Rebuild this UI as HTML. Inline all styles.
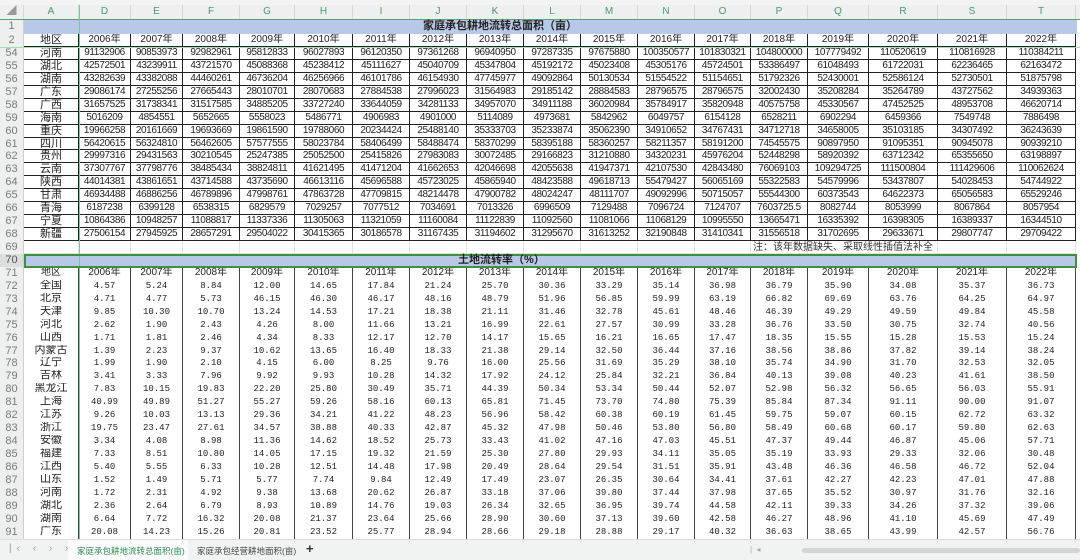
<!DOCTYPE html>
<html><head><meta charset="utf-8"><style>
*{margin:0;padding:0;box-sizing:border-box}
body{width:1080px;height:560px;overflow:hidden;background:#fff;position:relative;font-family:"Liberation Sans","Noto Sans CJK SC",sans-serif;color:#222}
.top{position:absolute;left:0;top:0;width:1080px;height:5px;background:#f3f3f3}
.ch{position:absolute;left:0;top:5px;height:15px;width:1080px;background:#eeefef;border-bottom:1px solid #5aa070;display:flex;font-size:10px;color:#4a9a6a}
.ch span{text-align:center;line-height:14px;border-right:1px solid #d6d6d6}
.r{display:flex;height:12.94px;width:1080px}
.r>*{flex:none;height:100%;text-align:center;font-style:normal;font-weight:normal;font-size:10px;line-height:12.9px;white-space:nowrap;overflow:hidden}
.ch>*:nth-child(1),.r>*:nth-child(1){width:24px}
.ch>*:nth-child(2),.r>*:nth-child(2){width:55px}
.ch>*:nth-child(3),.r>*:nth-child(3){width:52px}
.ch>*:nth-child(4),.r>*:nth-child(4){width:52px}
.ch>*:nth-child(5),.r>*:nth-child(5){width:57px}
.ch>*:nth-child(6),.r>*:nth-child(6){width:55px}
.ch>*:nth-child(7),.r>*:nth-child(7){width:58px}
.ch>*:nth-child(8),.r>*:nth-child(8),.ch>*:nth-child(9),.r>*:nth-child(9),.ch>*:nth-child(10),.r>*:nth-child(10),.ch>*:nth-child(11),.r>*:nth-child(11),.ch>*:nth-child(12),.r>*:nth-child(12),.ch>*:nth-child(13),.r>*:nth-child(13),.ch>*:nth-child(15),.r>*:nth-child(15){width:57px}
.ch>*:nth-child(14),.r>*:nth-child(14){width:56px}
.ch>*:nth-child(16),.r>*:nth-child(16){width:61px}
.ch>*:nth-child(17),.r>*:nth-child(17),.ch>*:nth-child(18),.r>*:nth-child(18),.ch>*:nth-child(19),.r>*:nth-child(19){width:69px}
.r>b{background:#eeefef;color:#7a7a7a;border-right:1px solid #cfcfcf;font-size:11px}
.a>i{border-right:1px solid #222;border-bottom:1px solid #222;letter-spacing:-0.4px}
.a>i:nth-child(2),.h>i:nth-child(2),.c>i:nth-child(2){font-size:11px;letter-spacing:0}
.h>i{border-right:1px solid #222;border-bottom:1px solid #222}
.c>i{border-right:1px solid #444;font-family:"Liberation Mono","Noto Sans CJK SC",monospace;font-size:9px}
.h.c>i{font-family:"Liberation Sans","Noto Sans CJK SC",sans-serif;font-size:10px;border-bottom:none}
.e>i{border-right:1px solid #e2e2e2;border-bottom:1px solid #e2e2e2}
.t{position:relative}
.t>em{position:absolute!important;left:24px;top:0;width:1053px!important;height:100%;background:#b7c9e6}
.t>b{position:relative;z-index:1}
.t>s{position:absolute!important;width:auto!important;overflow:visible!important;top:0;text-decoration:none;font-weight:bold;font-size:11px;line-height:13px;z-index:1;color:#222}
#wrap{position:absolute;left:0;top:34px}
.fz{position:absolute;left:79px;top:5px;width:1px;height:534px;background:#7cc79a}
.fh{position:absolute;left:0;top:47px;width:1080px;height:1px;background:#a8dcbc}
.sel{position:absolute;left:24px;top:253.5px;width:1053px;height:14.5px;border:2px solid #3f8f3f}
.tabs{position:absolute;left:0;top:539px;width:1080px;height:21px;background:#f1f2f2;border-top:1px solid #dcdcdc;font-size:8.5px;font-family:"Liberation Sans","Noto Sans CJK SC",sans-serif}
.tabs span{position:absolute;top:5px;white-space:nowrap}
</style></head><body>
<div class="top"></div>
<div class="ch"><span style="color:#999">◢</span><span>A</span><span>D</span><span>E</span><span>F</span><span>G</span><span>H</span><span>I</span><span>J</span><span>K</span><span>L</span><span>M</span><span>N</span><span>O</span><span>P</span><span>Q</span><span>R</span><span>S</span><span>T</span></div>
<div class="r t" style="position:absolute;top:20px;height:14px"><b>1</b><em></em><s style="left:423px">家庭承包耕地流转总面积（亩）</s></div>
<div id="wrap">
<div class="r h"><b>2</b><i>地区</i><i>2006年</i><i>2007年</i><i>2008年</i><i>2009年</i><i>2010年</i><i>2011年</i><i>2012年</i><i>2013年</i><i>2014年</i><i>2015年</i><i>2016年</i><i>2017年</i><i>2018年</i><i>2019年</i><i>2020年</i><i>2021年</i><i>2022年</i></div>
<div class="r a"><b>54</b><i>河南</i><i>91132906</i><i>90853973</i><i>92982961</i><i>95812833</i><i>96027893</i><i>96120350</i><i>97361268</i><i>96940950</i><i>97287335</i><i>97675880</i><i>100350577</i><i>101830321</i><i>104800000</i><i>107779492</i><i>110520619</i><i>110816928</i><i>110384211</i></div>
<div class="r a"><b>55</b><i>湖北</i><i>42572501</i><i>43239911</i><i>43721570</i><i>45088368</i><i>45238412</i><i>45111627</i><i>45040709</i><i>45347804</i><i>45192172</i><i>45023408</i><i>45305176</i><i>45724501</i><i>53386497</i><i>61048493</i><i>61722031</i><i>62236465</i><i>62163472</i></div>
<div class="r a"><b>56</b><i>湖南</i><i>43282639</i><i>43382088</i><i>44460261</i><i>46736204</i><i>46256966</i><i>46101786</i><i>46154930</i><i>47745977</i><i>49092864</i><i>50130534</i><i>51554522</i><i>51154651</i><i>51792326</i><i>52430001</i><i>52586124</i><i>52730501</i><i>51875798</i></div>
<div class="r a"><b>57</b><i>广东</i><i>29086174</i><i>27255256</i><i>27665443</i><i>28010701</i><i>28070683</i><i>27884538</i><i>27996023</i><i>31564983</i><i>29185142</i><i>28884583</i><i>28796575</i><i>28796575</i><i>32002430</i><i>35208284</i><i>35264789</i><i>43727562</i><i>34939363</i></div>
<div class="r a"><b>58</b><i>广西</i><i>31657525</i><i>31738341</i><i>31517585</i><i>34885205</i><i>33727240</i><i>33644059</i><i>34281133</i><i>34957070</i><i>34911188</i><i>36020984</i><i>35784917</i><i>35820948</i><i>40575758</i><i>45330567</i><i>47452525</i><i>48953708</i><i>46620714</i></div>
<div class="r a"><b>59</b><i>海南</i><i>5016209</i><i>4854551</i><i>5652665</i><i>5558023</i><i>5486771</i><i>4906983</i><i>4901000</i><i>5114089</i><i>4973681</i><i>5842962</i><i>6049757</i><i>6154128</i><i>6528211</i><i>6902294</i><i>6459366</i><i>7549748</i><i>7886498</i></div>
<div class="r a"><b>60</b><i>重庆</i><i>19966258</i><i>20161669</i><i>19693669</i><i>19861590</i><i>19788060</i><i>20234424</i><i>25488140</i><i>35333703</i><i>35233874</i><i>35062390</i><i>34910652</i><i>34767431</i><i>34712718</i><i>34658005</i><i>35103185</i><i>34307492</i><i>36243639</i></div>
<div class="r a"><b>61</b><i>四川</i><i>56420615</i><i>56324810</i><i>56462605</i><i>57577555</i><i>58023784</i><i>58406499</i><i>58488474</i><i>58370299</i><i>58395188</i><i>58360257</i><i>58211357</i><i>58191200</i><i>74545575</i><i>90897950</i><i>91095351</i><i>90945078</i><i>90939210</i></div>
<div class="r a"><b>62</b><i>贵州</i><i>29997316</i><i>29431563</i><i>30210545</i><i>25247385</i><i>25052500</i><i>25415826</i><i>27983083</i><i>30072485</i><i>29166823</i><i>31210880</i><i>34320231</i><i>45976204</i><i>52448298</i><i>58920392</i><i>63712342</i><i>65355650</i><i>63198897</i></div>
<div class="r a"><b>63</b><i>云南</i><i>37307767</i><i>37798776</i><i>38485434</i><i>38824811</i><i>41621495</i><i>41471204</i><i>41662653</i><i>42046698</i><i>42055638</i><i>41947371</i><i>42107530</i><i>42843480</i><i>76069103</i><i>109294725</i><i>111500804</i><i>111429606</i><i>110062624</i></div>
<div class="r a"><b>64</b><i>陕西</i><i>44014381</i><i>43861651</i><i>43714588</i><i>43735690</i><i>46613116</i><i>45696588</i><i>45723025</i><i>45865940</i><i>48423588</i><i>49618713</i><i>55479427</i><i>56065169</i><i>55322583</i><i>54579996</i><i>53437807</i><i>54028453</i><i>54744922</i></div>
<div class="r a"><b>65</b><i>甘肃</i><i>46934488</i><i>46886256</i><i>46789896</i><i>47998761</i><i>47863728</i><i>47709815</i><i>48214478</i><i>47900782</i><i>48024247</i><i>48111707</i><i>49092996</i><i>50715057</i><i>55544300</i><i>60373543</i><i>64622373</i><i>65056583</i><i>65529246</i></div>
<div class="r a"><b>66</b><i>青海</i><i>6187238</i><i>6399128</i><i>6538315</i><i>6829579</i><i>7029257</i><i>7077512</i><i>7034691</i><i>7013326</i><i>6996509</i><i>7129488</i><i>7096724</i><i>7124707</i><i>7603725.5</i><i>8082744</i><i>8053999</i><i>8067864</i><i>8057954</i></div>
<div class="r a"><b>67</b><i>宁夏</i><i>10864386</i><i>10948257</i><i>11088817</i><i>11337336</i><i>11305063</i><i>11321059</i><i>11160084</i><i>11122839</i><i>11092560</i><i>11081066</i><i>11068129</i><i>10995550</i><i>13665471</i><i>16335392</i><i>16398305</i><i>16389337</i><i>16344510</i></div>
<div class="r a"><b>68</b><i>新疆</i><i>27506154</i><i>27945925</i><i>28657291</i><i>29504022</i><i>30415365</i><i>30186578</i><i>31167435</i><i>31194602</i><i>31295670</i><i>31613252</i><i>32190848</i><i>31410341</i><i>31556518</i><i>31702695</i><i>29633671</i><i>29807747</i><i>29709422</i></div>
<div class="r e t"><b>69</b><i></i><i></i><i></i><i></i><i></i><i></i><i></i><i></i><i></i><i></i><i></i><i></i><i></i><i></i><i></i><i></i><i></i><i></i><s style="left:753px;font-weight:normal;font-size:10px;color:#333">注：该年数据缺失、采取线性插值法补全</s></div>
<div class="r t"><b style="background:#dcdddd;color:#555">70</b><em></em><s style="left:458px">土地流转率（%）</s></div>
<div class="r h c"><b>71</b><i>地区</i><i>2006年</i><i>2007年</i><i>2008年</i><i>2009年</i><i>2010年</i><i>2011年</i><i>2012年</i><i>2013年</i><i>2014年</i><i>2015年</i><i>2016年</i><i>2017年</i><i>2018年</i><i>2019年</i><i>2020年</i><i>2021年</i><i>2022年</i></div>
<div class="r c"><b>72</b><i>全国</i><i>4.57</i><i>5.24</i><i>8.84</i><i>12.00</i><i>14.65</i><i>17.84</i><i>21.24</i><i>25.70</i><i>30.36</i><i>33.29</i><i>35.14</i><i>36.98</i><i>36.79</i><i>35.90</i><i>34.08</i><i>35.37</i><i>36.73</i></div>
<div class="r c"><b>73</b><i>北京</i><i>4.71</i><i>4.77</i><i>5.73</i><i>46.15</i><i>46.30</i><i>46.17</i><i>48.16</i><i>48.79</i><i>51.96</i><i>56.85</i><i>59.99</i><i>63.19</i><i>66.82</i><i>69.69</i><i>63.76</i><i>64.25</i><i>64.97</i></div>
<div class="r c"><b>74</b><i>天津</i><i>9.85</i><i>10.30</i><i>10.70</i><i>13.24</i><i>14.53</i><i>17.21</i><i>18.38</i><i>21.11</i><i>31.46</i><i>32.78</i><i>45.61</i><i>48.46</i><i>46.39</i><i>49.29</i><i>49.59</i><i>49.84</i><i>45.58</i></div>
<div class="r c"><b>75</b><i>河北</i><i>2.62</i><i>1.90</i><i>2.43</i><i>4.26</i><i>8.00</i><i>11.66</i><i>13.21</i><i>16.99</i><i>22.61</i><i>27.57</i><i>30.99</i><i>33.28</i><i>36.76</i><i>33.50</i><i>30.75</i><i>32.74</i><i>40.56</i></div>
<div class="r c"><b>76</b><i>山西</i><i>1.71</i><i>1.81</i><i>2.46</i><i>4.34</i><i>8.33</i><i>12.17</i><i>12.70</i><i>14.17</i><i>15.65</i><i>16.21</i><i>16.65</i><i>17.47</i><i>18.35</i><i>15.55</i><i>15.28</i><i>15.53</i><i>15.24</i></div>
<div class="r c"><b>77</b><i>内蒙古</i><i>1.39</i><i>2.23</i><i>9.37</i><i>10.62</i><i>13.65</i><i>16.40</i><i>18.33</i><i>21.38</i><i>29.14</i><i>32.50</i><i>36.44</i><i>37.16</i><i>38.56</i><i>38.86</i><i>37.82</i><i>39.14</i><i>38.24</i></div>
<div class="r c"><b>78</b><i>辽宁</i><i>1.99</i><i>1.90</i><i>2.10</i><i>4.15</i><i>6.00</i><i>8.25</i><i>9.76</i><i>16.00</i><i>25.56</i><i>31.69</i><i>35.29</i><i>38.10</i><i>35.74</i><i>34.90</i><i>31.70</i><i>32.53</i><i>32.05</i></div>
<div class="r c"><b>79</b><i>吉林</i><i>3.41</i><i>3.33</i><i>7.96</i><i>9.92</i><i>9.93</i><i>10.28</i><i>14.32</i><i>17.92</i><i>24.12</i><i>25.84</i><i>32.21</i><i>36.84</i><i>40.13</i><i>39.08</i><i>40.23</i><i>41.61</i><i>38.50</i></div>
<div class="r c"><b>80</b><i>黑龙江</i><i>7.83</i><i>10.15</i><i>19.83</i><i>22.20</i><i>25.80</i><i>30.49</i><i>35.71</i><i>44.39</i><i>50.34</i><i>53.34</i><i>50.44</i><i>52.07</i><i>52.98</i><i>56.32</i><i>56.65</i><i>56.03</i><i>55.91</i></div>
<div class="r c"><b>81</b><i>上海</i><i>40.99</i><i>49.89</i><i>51.27</i><i>55.27</i><i>59.26</i><i>58.16</i><i>60.13</i><i>65.81</i><i>71.45</i><i>73.70</i><i>74.80</i><i>75.39</i><i>85.84</i><i>87.34</i><i>91.11</i><i>90.00</i><i>91.07</i></div>
<div class="r c"><b>82</b><i>江苏</i><i>9.26</i><i>10.03</i><i>13.13</i><i>29.36</i><i>34.21</i><i>41.22</i><i>48.23</i><i>56.96</i><i>58.42</i><i>60.38</i><i>60.19</i><i>61.45</i><i>59.75</i><i>59.07</i><i>60.15</i><i>62.72</i><i>63.32</i></div>
<div class="r c"><b>83</b><i>浙江</i><i>19.75</i><i>23.47</i><i>27.61</i><i>34.57</i><i>38.88</i><i>40.33</i><i>42.87</i><i>45.32</i><i>47.98</i><i>50.46</i><i>53.80</i><i>56.80</i><i>58.49</i><i>60.68</i><i>60.17</i><i>59.80</i><i>62.63</i></div>
<div class="r c"><b>84</b><i>安徽</i><i>3.34</i><i>4.08</i><i>8.98</i><i>11.36</i><i>14.62</i><i>18.52</i><i>25.73</i><i>33.43</i><i>41.02</i><i>47.16</i><i>47.03</i><i>45.51</i><i>47.37</i><i>49.44</i><i>46.87</i><i>45.06</i><i>57.71</i></div>
<div class="r c"><b>85</b><i>福建</i><i>7.33</i><i>8.51</i><i>10.80</i><i>14.05</i><i>17.15</i><i>19.32</i><i>21.59</i><i>25.30</i><i>27.80</i><i>29.93</i><i>34.11</i><i>35.05</i><i>35.19</i><i>33.93</i><i>29.33</i><i>32.06</i><i>30.48</i></div>
<div class="r c"><b>86</b><i>江西</i><i>5.40</i><i>5.55</i><i>6.33</i><i>10.28</i><i>12.51</i><i>14.48</i><i>17.98</i><i>20.49</i><i>28.64</i><i>29.54</i><i>31.51</i><i>35.91</i><i>43.48</i><i>46.36</i><i>46.58</i><i>46.72</i><i>52.04</i></div>
<div class="r c"><b>87</b><i>山东</i><i>1.52</i><i>1.49</i><i>5.71</i><i>5.77</i><i>7.74</i><i>9.84</i><i>12.49</i><i>17.49</i><i>23.07</i><i>26.35</i><i>30.64</i><i>34.41</i><i>37.61</i><i>42.27</i><i>42.23</i><i>47.01</i><i>47.88</i></div>
<div class="r c"><b>88</b><i>河南</i><i>1.72</i><i>2.31</i><i>4.92</i><i>9.38</i><i>13.68</i><i>20.62</i><i>26.87</i><i>33.18</i><i>37.06</i><i>39.80</i><i>37.44</i><i>37.98</i><i>37.65</i><i>35.52</i><i>30.97</i><i>31.76</i><i>32.16</i></div>
<div class="r c"><b>89</b><i>湖北</i><i>2.36</i><i>2.64</i><i>6.79</i><i>8.93</i><i>10.89</i><i>14.76</i><i>19.03</i><i>26.34</i><i>32.65</i><i>36.95</i><i>39.74</i><i>44.58</i><i>42.11</i><i>39.33</i><i>34.26</i><i>37.32</i><i>39.06</i></div>
<div class="r c"><b>90</b><i>湖南</i><i>6.64</i><i>7.72</i><i>16.32</i><i>20.08</i><i>21.37</i><i>23.64</i><i>25.66</i><i>28.90</i><i>30.60</i><i>37.13</i><i>39.60</i><i>42.58</i><i>46.27</i><i>48.96</i><i>41.10</i><i>45.69</i><i>47.49</i></div>
<div class="r c"><b>91</b><i>广东</i><i>20.08</i><i>14.23</i><i>15.26</i><i>20.81</i><i>23.52</i><i>25.77</i><i>28.94</i><i>28.66</i><i>29.18</i><i>28.88</i><i>29.17</i><i>40.32</i><i>36.63</i><i>38.65</i><i>43.99</i><i>42.57</i><i>56.76</i></div>
<div class="r c"><b>92</b><i>广西</i><i></i><i></i><i></i><i></i><i></i><i></i><i></i><i></i><i></i><i></i><i></i><i></i><i></i><i></i><i></i><i></i><i></i></div>
</div>
<div class="fz"></div>
<div class="fh"></div>
<div class="sel"></div>
<div class="tabs">
<span style="left:9px;color:#999;letter-spacing:5px;font-size:10px;top:3px">|‹ ‹ › ›|</span>
<div style="position:absolute;left:68px;top:0;width:120px;height:20px;background:#fbfbfb"></div>
<span style="left:77px;color:#2e8b57">家庭承包耕地流转总面积(亩)</span>
<span style="left:197px;color:#444">家庭承包经营耕地面积(亩)</span>
<span style="left:306px;top:1px;font-size:13px;font-weight:bold;color:#333">+</span>
<span style="left:750px;color:#aaa;font-size:8px">|&nbsp;&nbsp;◂</span>
<div style="position:absolute;left:802px;top:8px;width:278px;height:5px;border-radius:3px;background:#d4d4d4"></div>
</div>
</body></html>
